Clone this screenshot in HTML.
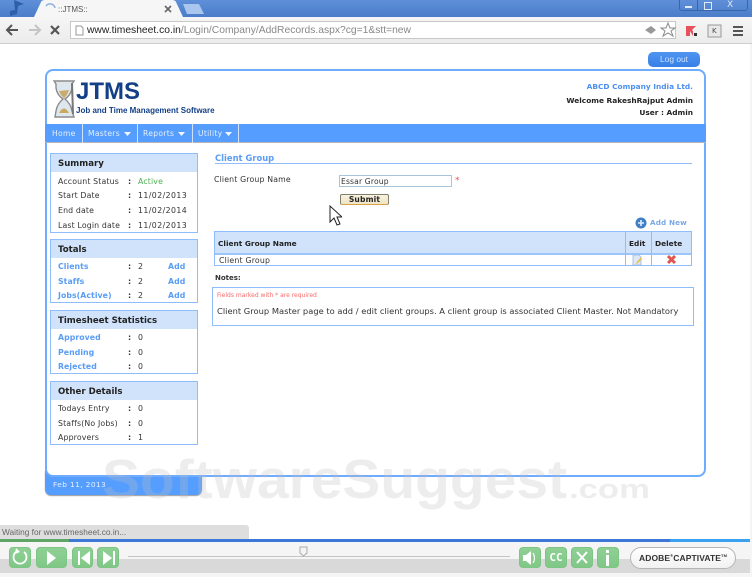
<!DOCTYPE html>
<html><head><meta charset="utf-8"><style>
html,body{margin:0;padding:0;background:#fff}
#p{position:relative;width:752px;height:577px;overflow:hidden;background:#fff;font-family:"DejaVu Sans",sans-serif;font-size:7.8px;letter-spacing:.15px;color:#333;filter:blur(.35px)}
#p div,#p span.a{position:absolute;white-space:nowrap}
.t{line-height:12px;height:12px;margin-top:1px}
.d{letter-spacing:.42px}
.box{left:50px;width:146px;border:1px solid #8fbdfb;background:#fff}
.hd{left:0;top:0;width:146px;height:18px;background:#d0e3fb;font-weight:bold;font-size:8.6px;letter-spacing:0;line-height:20px;text-indent:7px;color:#222}
.l{color:#5a9df5;font-weight:bold;letter-spacing:.05px}
.g{background:linear-gradient(#8fd095,#80c887);border:1px solid #7cc583;border-radius:4px;box-sizing:border-box}
.nav{top:124px;height:19px;line-height:19px;color:#e6f0ff;font-size:7.6px;letter-spacing:.3px}
.sep{top:124px;width:1px;height:19px;background:#cfe2ff}
</style></head><body><div id="p">

<!-- browser chrome -->
<div style="left:0;top:0;width:752px;height:17px;background:linear-gradient(#5f8fd8,#4a7cc9)"></div>
<div style="left:0;top:17px;width:752px;height:27px;background:linear-gradient(#f5f5f5,#ececec);border-bottom:1px solid #cfcfcf;box-sizing:border-box"></div>
<div style="left:70px;top:21px;width:606px;height:18px;background:#fff;border:1px solid #c8c8c8;box-sizing:border-box"></div>
<svg style="position:absolute;left:0;top:0" width="752" height="44">
<path d="M34 17 L41 2 Q42 0 45 0 L172 0 Q175 0 176 2 L183 17 Z" fill="#f6f6f6"/>
<path d="M183 4 L199 4 L204 14 L187 14 Z" fill="#a9c6ee"/>
<path d="M14 0 L24 4 L18 6 L17 14 L10 16 L10 11 L15 10 L14 0Z" fill="#2d5fa8"/>
<path d="M46 6 A5 5 0 0 1 55 8" fill="none" stroke="#8fb0dd" stroke-width="1.5"/>
<path d="M165 6 L171 12 M171 6 L165 12" stroke="#666" stroke-width="1.6"/>
</svg>
<div class="t" style="left:58px;top:3px;font-family:'Liberation Sans',sans-serif;font-size:8px;letter-spacing:0;color:#555">::JTMS::</div>
<svg style="position:absolute;left:0;top:17px" width="752" height="27">
<path d="M18 13 L8 13 M12 8 L7 13 L12 18" fill="none" stroke="#555" stroke-width="2"/>
<path d="M39 13 L29 13 M35 8 L40 13 L35 18" fill="none" stroke="#c4c4c4" stroke-width="2"/>
<path d="M51 9 L59 17 M59 9 L51 17" stroke="#555" stroke-width="2.2"/>
<path d="M76 9 L81 9 L83 11 L83 18 L76 18Z" fill="#fff" stroke="#999"/>
<path d="M651 9 L656 13 L651 17 L645 13Z" fill="#999"/>
<path d="M668 6 L670 11 L675 11 L671 14 L673 19 L668 16 L663 19 L665 14 L661 11 L666 11Z" fill="#fff" stroke="#888"/>
<path d="M686 9 L686 19 L690 19 L690 14 L693 19 L693 14 L692 13 L696 9Z" fill="#e8505b"/>
<rect x="694" y="16" width="3" height="3" fill="#333"/>
<rect x="708" y="8" width="13" height="12" fill="#e8e8e8" stroke="#999"/>
<path d="M733 10h10M733 14h10M733 18h10" stroke="#555" stroke-width="2"/>
</svg>
<div class="t" style="left:712px;top:24px;font-size:7px;letter-spacing:0;color:#444">K</div>
<div class="t" style="left:87px;top:24px;font-family:'Liberation Sans',sans-serif;font-size:10.3px;letter-spacing:0;color:#888"><span style="color:#222">www.timesheet.co.in</span>/Login/Company/AddRecords.aspx?cg=1&amp;stt=new</div>
<div style="left:679px;top:0;width:69px;height:11px;border:1px solid #3a66a8;border-top:0;border-radius:0 0 3px 3px;box-sizing:border-box"></div>
<div style="left:697px;top:0;width:1px;height:11px;background:#3a66a8"></div>
<div style="left:685px;top:6px;width:7px;height:2px;background:#dfe9f7"></div>
<div style="left:704px;top:2px;width:6px;height:6px;border:1px solid #dfe9f7"></div>
<div class="t" style="left:727px;top:-2px;font-size:9px;color:#dfe9f7">X</div>
<div style="left:750px;top:44px;width:2px;height:495px;background:#f4f4f4"></div>

<!-- logout -->
<div style="left:648px;top:52px;width:52px;height:15px;background:linear-gradient(#4f94ef,#367fe6);border-radius:5px;color:#cfe2ff;font-family:'Liberation Sans',sans-serif;font-size:8.4px;letter-spacing:0;line-height:15px;text-align:center">Log out</div>

<!-- footer tab -->
<div style="left:45px;top:470px;width:157px;height:25px;background:#559dff;border-radius:0 0 6px 6px;box-shadow:0 1px 1px #999"></div>
<div class="t" style="left:53px;top:478px;color:#e6f0ff;font-size:7.4px;letter-spacing:.4px">Feb 11, 2013</div>

<!-- card -->
<div style="left:45px;top:69px;width:661px;height:408px;box-sizing:border-box;border:2px solid #6fabff;border-radius:8px;background:#fff"></div>

<!-- logo -->
<svg style="position:absolute;left:52px;top:80px" width="24" height="39">
<path d="M2 1 L22 1 L20 4 L20 8 Q19 15 13 19 Q19 24 20 31 L22 37 L3 37 L4 31 Q5 24 11 19 Q5 15 4 8 L4 4Z" fill="#dfe7ee" stroke="#8b8b8b" stroke-width="1.4"/>
<path d="M7 11 L17 10 Q15 16 12 18 Q9 16 7 11Z" fill="#c9ab6b"/>
<path d="M7 33 Q12 24 17 33Z" fill="#c9a960"/>
<path d="M20 3 L21 34" stroke="#777" stroke-width="2"/>
</svg>
<div style="left:76px;top:79px;font-family:'Liberation Sans',sans-serif;font-weight:bold;font-size:24px;letter-spacing:0;line-height:26px;color:#123f86">JTMS</div>
<div style="left:76px;top:105px;font-family:'Liberation Sans',sans-serif;font-weight:bold;font-size:8px;letter-spacing:0;line-height:12px;color:#123f86">Job and Time Management Software</div>

<div class="t" style="right:59px;top:80px;color:#4c90ef;font-weight:bold;font-size:7.4px;letter-spacing:0">ABCD Company India Ltd.</div>
<div class="t" style="right:59px;top:94px;color:#222;font-weight:bold;font-size:7.4px;letter-spacing:0">Welcome RakeshRajput Admin</div>
<div class="t" style="right:59px;top:106px;color:#222;font-weight:bold;font-size:7.4px;letter-spacing:0">User : Admin</div>

<!-- nav -->
<div style="left:45px;top:124px;width:661px;height:19px;background:#559dff;border-bottom:1px solid #b5b5b5;box-sizing:border-box"></div>
<div class="nav" style="left:52px">Home</div><div class="sep" style="left:82px"></div>
<div class="nav" style="left:88px">Masters</div><div class="sep" style="left:137px"></div>
<div class="nav" style="left:143px">Reports</div><div class="sep" style="left:192px"></div>
<div class="nav" style="left:198px">Utility</div><div class="sep" style="left:238px"></div>
<svg style="position:absolute;left:0;top:124px" width="240" height="19" fill="#f2f7ff"><path d="M124 8h7l-3.500 4zM178 8h7l-3.500 4zM225 8h7l-3.500 4z"/></svg>

<!-- sidebar -->
<div class="box" style="top:153px;height:78px"><div class="hd">Summary</div></div>
<div class="t" style="left:58px;top:175px">Account Status</div><div class="t" style="left:128px;top:175px"><b>:</b></div><div class="t" style="left:138px;top:175px;color:#4caf50">Active</div>
<div class="t" style="left:58px;top:189px">Start Date</div><div class="t" style="left:128px;top:189px"><b>:</b></div><div class="t d" style="left:138px;top:189px">11/02/2013</div>
<div class="t" style="left:58px;top:204px">End date</div><div class="t" style="left:128px;top:204px"><b>:</b></div><div class="t d" style="left:138px;top:204px">11/02/2014</div>
<div class="t" style="left:58px;top:219px">Last Login date</div><div class="t" style="left:128px;top:219px"><b>:</b></div><div class="t d" style="left:138px;top:219px">11/02/2013</div>

<div class="box" style="top:239px;height:62px"><div class="hd">Totals</div></div>
<div class="t l" style="left:58px;top:260px">Clients</div><div class="t" style="left:128px;top:260px"><b>:</b></div><div class="t" style="left:138px;top:260px">2</div><div class="t l" style="left:168px;top:260px">Add</div>
<div class="t l" style="left:58px;top:275px">Staffs</div><div class="t" style="left:128px;top:275px"><b>:</b></div><div class="t" style="left:138px;top:275px">2</div><div class="t l" style="left:168px;top:275px">Add</div>
<div class="t l" style="left:58px;top:289px">Jobs(Active)</div><div class="t" style="left:128px;top:289px"><b>:</b></div><div class="t" style="left:138px;top:289px">2</div><div class="t l" style="left:168px;top:289px">Add</div>

<div class="box" style="top:310px;height:62px"><div class="hd">Timesheet Statistics</div></div>
<div class="t l" style="left:58px;top:331px">Approved</div><div class="t" style="left:128px;top:331px"><b>:</b></div><div class="t" style="left:138px;top:331px">0</div>
<div class="t l" style="left:58px;top:346px">Pending</div><div class="t" style="left:128px;top:346px"><b>:</b></div><div class="t" style="left:138px;top:346px">0</div>
<div class="t l" style="left:58px;top:360px">Rejected</div><div class="t" style="left:128px;top:360px"><b>:</b></div><div class="t" style="left:138px;top:360px">0</div>

<div class="box" style="top:381px;height:62px"><div class="hd">Other Details</div></div>
<div class="t" style="left:58px;top:402px">Todays Entry</div><div class="t" style="left:128px;top:402px"><b>:</b></div><div class="t" style="left:138px;top:402px">0</div>
<div class="t" style="left:58px;top:417px">Staffs(No Jobs)</div><div class="t" style="left:128px;top:417px"><b>:</b></div><div class="t" style="left:138px;top:417px">0</div>
<div class="t" style="left:58px;top:431px">Approvers</div><div class="t" style="left:128px;top:431px"><b>:</b></div><div class="t" style="left:138px;top:431px">1</div>

<!-- main -->
<div class="t" style="left:215px;top:151px;color:#5a9df5;font-weight:bold;font-size:8.4px;letter-spacing:0">Client Group</div>
<div style="left:215px;top:163px;width:477px;height:1px;background:#8fbdfb"></div>
<div class="t" style="left:214px;top:173px;font-size:7.8px">Client Group Name</div>
<div style="left:339px;top:175px;width:113px;height:12px;border:1px solid #a9c4dd;box-sizing:border-box;font-size:7.6px;line-height:12px;padding-left:1px;color:#333">Essar Group</div>
<div class="t" style="left:455px;top:174px;color:#f05050;font-size:9px">*</div>
<div style="left:340px;top:194px;width:49px;height:11px;border:1px solid #7f7f6c;border-bottom:1px solid #d8a14a;border-radius:2px;box-sizing:border-box;background:linear-gradient(#f8f2e0,#efe5c4);font-weight:bold;font-size:7.6px;line-height:9px;text-align:center;color:#222">Submit</div>
<svg style="position:absolute;left:329px;top:205px" width="13" height="22"><path d="M1 1 L1 17 L5 13 L8 20 L11 19 L8 12 L13 12Z" fill="#fff" stroke="#222"/></svg>

<svg style="position:absolute;left:635px;top:217px" width="12" height="12"><circle cx="6" cy="6" r="5.500" fill="#3f7fc4"/><path d="M6 3v6M3 6h6" stroke="#dfeeff" stroke-width="1.600"/></svg>
<div class="t" style="left:650px;top:216px;color:#7aa9e8;font-weight:bold;font-size:7.2px">Add New</div>

<div style="left:214px;top:231px;width:478px;height:35px;border:1px solid #8fbdfb;box-sizing:border-box;background:#fff"></div>
<div style="left:215px;top:232px;width:476px;height:21px;background:#d0e3fb"></div>
<div style="left:215px;top:253px;width:476px;height:2px;background:#9cc5fb"></div>
<div style="left:625px;top:232px;width:1px;height:33px;background:#8fbdfb"></div>
<div style="left:651px;top:232px;width:1px;height:33px;background:#8fbdfb"></div>
<div class="t" style="left:218px;top:237px;font-weight:bold;color:#222;font-size:7.4px;letter-spacing:0">Client Group Name</div>
<div class="t" style="left:629px;top:237px;font-weight:bold;color:#222;font-size:7.4px;letter-spacing:0">Edit</div>
<div class="t" style="left:655px;top:237px;font-weight:bold;color:#222;font-size:7.4px;letter-spacing:0">Delete</div>
<div class="t" style="left:219px;top:254px;letter-spacing:.2px">Client Group</div>
<svg style="position:absolute;left:631px;top:254px" width="12" height="12"><path d="M2 1h6l2 2v8H2z" fill="#dbe8f7" stroke="#9db8d8" stroke-width=".8"/><path d="M5 9 L10 3 L11 5 L6 10Z" fill="#e7c04f"/></svg>
<svg style="position:absolute;left:666px;top:254px" width="11" height="11"><path d="M2 2 L9 9 M9 2 L2 9" stroke="#e0564e" stroke-width="3"/></svg>

<div class="t" style="left:215px;top:271px;font-weight:bold;color:#333;font-size:7px;letter-spacing:0">Notes:</div>
<div style="left:212px;top:287px;width:482px;height:39px;border:1px solid #8fbdfb;box-sizing:border-box"></div>
<div class="t" style="left:217px;top:289px;color:#f56a6a;font-size:6px;letter-spacing:0">Fields marked with * are required</div>
<div class="t" style="left:217px;top:304px;font-size:8.3px;letter-spacing:.02px;color:#333">Client Group Master page to add / edit client groups. A client group is associated Client Master. Not Mandatory</div>

<!-- watermark -->
<svg style="position:absolute;left:0;top:440px" width="752" height="80">
<text x="102" y="58" font-family="Liberation Sans" font-weight="bold" font-size="55" textLength="465" lengthAdjust="spacingAndGlyphs" letter-spacing="0" fill="rgba(190,190,190,.28)">SoftwareSuggest</text>
<text x="569" y="58" font-family="Liberation Sans" font-weight="bold" font-size="27" textLength="81" lengthAdjust="spacingAndGlyphs" letter-spacing="0" fill="rgba(190,190,190,.28)">.com</text>
</svg>

<!-- status -->
<div style="left:0;top:525px;width:249px;height:14px;background:#dedede;border-radius:0 3px 0 0;font-family:'Liberation Sans',sans-serif;font-size:8.3px;letter-spacing:0;line-height:15px;color:#666;text-indent:2px">Waiting for www.timesheet.co.in...</div>

<!-- player -->
<div style="left:0;top:539px;width:752px;height:38px;background:#f5f5f5"></div>
<div style="left:0;top:539px;width:750px;height:3px;background:#3b78d8"></div>
<div style="left:0;top:539px;width:69px;height:3px;background:#5fa565"></div>
<div style="left:670px;top:539px;width:80px;height:3px;background:#3aa0f0"></div>
<div style="left:0;top:559px;width:750px;height:14px;background:#d9d9d9"></div>
<div style="left:128px;top:556px;width:382px;height:1px;background:#c4c4c4"></div>
<svg style="position:absolute;left:299px;top:546px" width="9" height="11"><path d="M1 1h7v6l-3.500 3L1 7z" fill="#f4f4f4" stroke="#aaa"/></svg>
<div class="g" style="left:9px;top:547px;width:22px;height:21px"></div>
<div class="g" style="left:36px;top:547px;width:31px;height:21px"></div>
<div class="g" style="left:72px;top:547px;width:21px;height:21px"></div>
<div class="g" style="left:97px;top:547px;width:22px;height:21px"></div>
<div class="g" style="left:519px;top:547px;width:22px;height:21px"></div>
<div class="g" style="left:545px;top:547px;width:22px;height:21px"></div>
<div class="g" style="left:571px;top:547px;width:22px;height:21px"></div>
<div class="g" style="left:597px;top:547px;width:22px;height:21px"></div>
<svg style="position:absolute;left:0;top:540px" width="752" height="32" fill="#fff">
<path d="M16 12 A6.500 6.500 0 1 0 24 12" fill="none" stroke="#fff" stroke-width="1.800"/><path d="M16 8 L20 12 L15 14Z"/>
<path d="M47 11 L56 18 L47 25Z"/>
<path d="M78 11h2v14h-2zM81 18 L90 11 L90 25Z"/>
<path d="M103 11 L112 18 L103 25Z M113 11h2v14h-2z"/>
<path d="M523 15h3l5-4v14l-5-4h-3z"/><path d="M533 13 Q536 18 533 23" fill="none" stroke="#fff" stroke-width="1.200"/>
<path d="M577 12 L587 23 M587 12 L577 23" stroke="#fff" stroke-width="2" fill="none"/>
<rect x="606" y="10" width="3" height="3"/><rect x="606" y="15" width="3" height="11"/>
</svg>
<div style="left:545px;top:549px;width:22px;text-align:center;font-family:'DejaVu Sans Mono',monospace;font-weight:bold;font-size:11px;letter-spacing:0;line-height:18px;color:#fff">CC</div>
<div style="left:630px;top:547px;width:106px;height:22px;box-sizing:border-box;border:1px solid #b5b5b5;border-radius:11px;background:linear-gradient(#fff,#f1f1f1);font-family:'Liberation Sans',sans-serif;font-weight:bold;font-size:8.5px;letter-spacing:.1px;line-height:20px;text-align:center;color:#333">ADOBE<sup style="font-size:4px;line-height:0">®</sup>CAPTIVATE<sup style="font-size:4px;line-height:0">TM</sup></div>

</div></body></html>
